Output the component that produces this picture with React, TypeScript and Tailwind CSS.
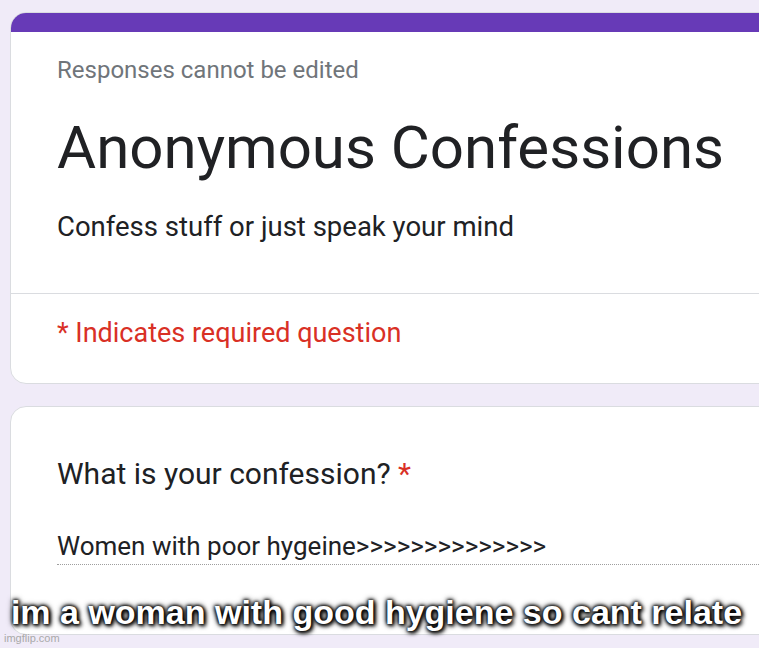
const roboto = { fontFamily: "Roboto, 'Liberation Sans', sans-serif" };

function HeaderCard() {
  return (
    <div className="w-[800px] rounded-[16px] overflow-hidden border border-[#dadce0] bg-white">
      <div className="h-[19px] bg-[#673ab7]" />
      <div className="px-[46px]">
        <div className="mt-[24px] text-[24px] leading-[28px] text-[#70757a]">
          Responses cannot be edited
        </div>
        <div className="mt-[28px] text-[60px] leading-[72px] text-[#202124]">
          Anonymous Confessions
        </div>
        <div className="mt-[27px] text-[27.5px] leading-[32px] text-[#202124]">
          Confess stuff or just speak your mind
        </div>
      </div>
      <div className="mt-[50px] border-t border-[#dadce0]" />
      <div className="px-[46px] pt-[23px] pb-[34px] text-[27px] leading-[32px] text-[#d93025]">
        * Indicates required question
      </div>
    </div>
  );
}

function QuestionCard() {
  return (
    <div className="w-[800px] h-[229px] rounded-[16px] border border-[#dadce0] bg-white pl-[46px]">
      <div className="mt-[49px] text-[30px] leading-[36px] text-[#202124]">
        What is your confession? <span className="text-[#d93025]">*</span>
      </div>
      <div className="mt-[39px] pb-[3px] border-b border-dotted border-[#9e9e9e] text-[26px] leading-[30px] text-[#202124]">
        Women with poor hygeine&gt;&gt;&gt;&gt;&gt;&gt;&gt;&gt;&gt;&gt;&gt;&gt;&gt;&gt;
      </div>
    </div>
  );
}

export default function App() {
  return (
    <div
      className="relative w-[759px] h-[648px] overflow-hidden bg-[#f0ebf8]"
      style={roboto}
    >
      <div className="flex flex-col gap-[22px] pt-[12px] pl-[10px]">
        <HeaderCard />
        <QuestionCard />
      </div>
      <div
        className="absolute left-0 right-0 top-[592px] pr-[6px] text-center text-[34px] leading-[40px] font-bold text-white [text-shadow:0_0_3px_#000,0_0_4px_#000,0_0_6px_#000,2px_2px_4px_#000]"
        style={{ fontFamily: "'Liberation Sans', Arial, sans-serif" }}
      >
        im a woman with good hygiene so cant relate
      </div>
      <div
        className="absolute left-[4px] top-[631px] text-[11px] leading-[14px] text-[#a9a9a9]"
        style={{ fontFamily: "'Liberation Sans', Arial, sans-serif" }}
      >
        imgflip.com
      </div>
    </div>
  );
}
